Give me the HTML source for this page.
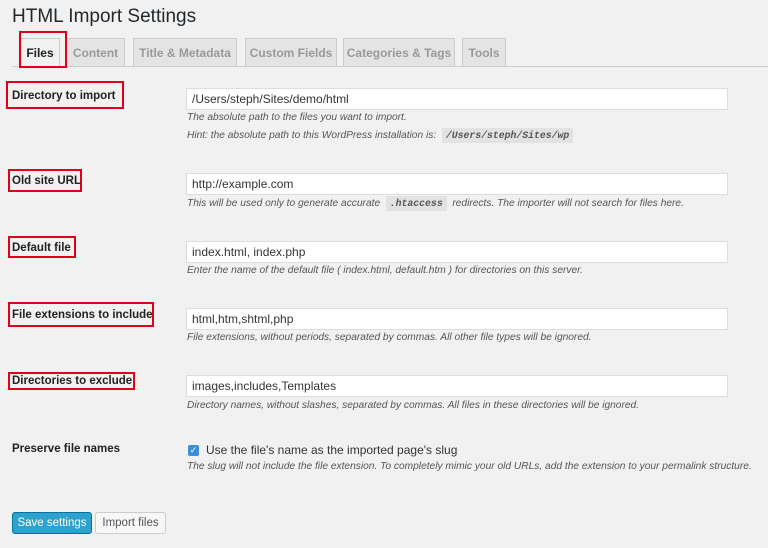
<!DOCTYPE html><html><head><style>
body{margin:0;width:768px;height:548px;background:#f1f1f1;font-family:"Liberation Sans",sans-serif;color:#222;position:relative;overflow:hidden}
.a{position:absolute;white-space:nowrap}
h1{position:absolute;left:12px;top:6px;margin:0;font-size:19px;font-weight:normal;color:#23282d}
.tabline{position:absolute;left:12px;right:0;top:66px;border-top:1px solid #ccc}
.tab{position:absolute;top:38px;height:28px;background:#e4e4e4;border:1px solid #ccc;border-bottom:none;color:#999;font-size:12px;font-weight:bold;text-align:center;line-height:28px;box-sizing:border-box;white-space:nowrap}
.tab.on{background:#f1f1f1;color:#222;height:29px}
.red{position:absolute;border:2px solid #e0001b;box-sizing:border-box}
.lbl{font-size:11.5px;font-weight:bold;color:#222}
.in{position:absolute;left:186px;width:542px;height:22px;background:#fff;border:1px solid #ddd;box-sizing:border-box;font-size:12px;line-height:20px;padding-left:5px;color:#333}
.d{font-size:10.2px;font-style:italic;color:#555}
code{font-family:"Liberation Mono",monospace;background:#e2e2e2;padding:2px 4px;font-size:9.8px;font-weight:bold}
.btn{position:absolute;top:512px;height:22px;font-size:11.5px;line-height:20px;text-align:center;border-radius:3px;box-sizing:border-box}
</style></head><body>
<h1>HTML Import Settings</h1>
<div class="tabline"></div>
<div class="tab on" style="left:20px;width:40px">Files</div>
<div class="tab" style="left:66px;width:59px">Content</div>
<div class="tab" style="left:133px;width:104px">Title &amp; Metadata</div>
<div class="tab" style="left:245px;width:92px">Custom Fields</div>
<div class="tab" style="left:343px;width:112px">Categories &amp; Tags</div>
<div class="tab" style="left:462px;width:44px">Tools</div>
<div class="red" style="left:19px;top:31px;width:48px;height:37px"></div>

<div class="red" style="left:6px;top:81px;width:118px;height:28px"></div>
<div class="a lbl" style="left:12px;top:90px">Directory to import</div>
<div class="in" style="top:88px">/Users/steph/Sites/demo/html</div>
<div class="a d" style="left:187px;top:112px">The absolute path to the files you want to import.</div>
<div class="a d" style="left:187px;top:130px">Hint: the absolute path to this WordPress installation is: &nbsp;<code>/Users/steph/Sites/wp</code></div>

<div class="red" style="left:8px;top:169px;width:74px;height:23px"></div>
<div class="a lbl" style="left:12px;top:175px">Old site URL</div>
<div class="in" style="top:173px">http://example.com</div>
<div class="a d" style="left:187px;top:198px">This will be used only to generate accurate &nbsp;<code>.htaccess</code>&nbsp; redirects. The importer will not search for files here.</div>

<div class="red" style="left:8px;top:236px;width:68px;height:22px"></div>
<div class="a lbl" style="left:12px;top:242px">Default file</div>
<div class="in" style="top:241px">index.html, index.php</div>
<div class="a d" style="left:187px;top:265px">Enter the name of the default file ( index.html, default.htm ) for directories on this server.</div>

<div class="red" style="left:8px;top:302px;width:146px;height:25px"></div>
<div class="a lbl" style="left:12px;top:309px">File extensions to include</div>
<div class="in" style="top:308px">html,htm,shtml,php</div>
<div class="a d" style="left:187px;top:332px">File extensions, without periods, separated by commas. All other file types will be ignored.</div>

<div class="red" style="left:8px;top:372px;width:127px;height:18px"></div>
<div class="a lbl" style="left:12px;top:375px">Directories to exclude</div>
<div class="in" style="top:375px">images,includes,Templates</div>
<div class="a d" style="left:187px;top:400px">Directory names, without slashes, separated by commas. All files in these directories will be ignored.</div>

<div class="a lbl" style="left:12px;top:443px">Preserve file names</div>
<div class="a" style="left:188px;top:445px;width:11px;height:11px;background:#3b8ed8;border-radius:2px;color:#fff;font-size:9px;line-height:11px;text-align:center">✓</div>
<div class="a" style="left:206px;top:443px;font-size:12px;color:#333">Use the file's name as the imported page's slug</div>
<div class="a d" style="left:187px;top:461px">The slug will not include the file extension. To completely mimic your old URLs, add the extension to your permalink structure.</div>

<div class="btn" style="left:12px;width:80px;background:#2ea2cc;border:1px solid #0074a2;color:#fff">Save settings</div>
<div class="btn" style="left:95px;width:71px;background:#f7f7f7;border:1px solid #ccc;color:#555">Import files</div>
</body></html>
